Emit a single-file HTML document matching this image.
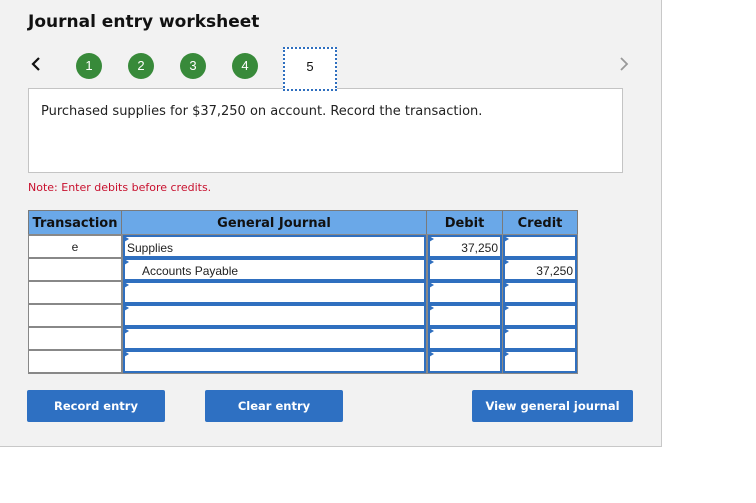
<!DOCTYPE html>
<html><head><meta charset="utf-8"><style>
*{box-sizing:border-box;margin:0;padding:0}
body{width:756px;height:503px;background:#fff;position:relative;font-family:"Liberation Sans",Arial,sans-serif;overflow:hidden}
.panel{position:absolute;left:0;top:0;width:662px;height:447px;background:#f2f2f2;border-right:1px solid #c8c8c8;border-bottom:1px solid #c8c8c8}
.a{position:absolute}
h1{position:absolute;left:28px;top:12px;font:bold 17px "DejaVu Sans",Verdana,sans-serif;color:#111}
.c{position:absolute;top:53px;width:26px;height:26px;border-radius:50%;background:#388a3a;color:#fff;font-size:13px;text-align:center;line-height:26px}
.box5{position:absolute;left:283px;top:47px;width:54px;height:44px;border:2px dotted #2f6fbf;background:#fff;text-align:center;line-height:36px;font-size:13px;color:#111}
.q{position:absolute;left:28px;top:88px;width:595px;height:85px;background:#fff;border:1px solid #c4c4c4;font:13px "DejaVu Sans",Verdana,sans-serif;color:#222;padding:15px 0 0 12px}
.note{position:absolute;left:28px;top:181px;font:11px "DejaVu Sans",Verdana,sans-serif;color:#c8102e}
.th{position:absolute;top:210px;height:25px;background:#6aa8e8;border:1px solid #7a7a7a;font:bold 13px "DejaVu Sans",Verdana,sans-serif;color:#111;text-align:center;line-height:25px}
.td{position:absolute;height:23px;border:1px solid #888;background:#fff;font-size:12px;color:#222}
.in{position:absolute;height:23px;border:2px solid #2f6fbf;background:#fff;font-size:12px;color:#222;line-height:22px}
.in::before{content:"";position:absolute;left:-1px;top:-1px;border-left:5px solid #2f6fbf;border-top:3px solid transparent;border-bottom:3px solid transparent}
.btn{position:absolute;top:390px;height:32px;background:#2e70c2;border-radius:2px;color:#fff;font:bold 11.5px "DejaVu Sans",Verdana,sans-serif;text-align:center;line-height:33px}
</style></head><body>
<div class="panel"></div>
<h1>Journal entry worksheet</h1>
<svg class="a" style="left:30px;top:56px" width="12" height="16"><path d="M9 2 L3 8 L9 14" stroke="#111" stroke-width="2.2" fill="none"/></svg>
<svg class="a" style="left:618px;top:56px" width="12" height="16"><path d="M3 2 L9 8 L3 14" stroke="#999" stroke-width="1.8" fill="none"/></svg>
<div class="c" style="left:76px">1</div>
<div class="c" style="left:128px">2</div>
<div class="c" style="left:180px">3</div>
<div class="c" style="left:232px">4</div>
<div class="q">Purchased supplies for $37,250 on account. Record the transaction.</div>
<div class="box5">5</div>
<div class="note">Note: Enter debits before credits.</div>
<div class="th" style="left:28px;width:94px">Transaction</div>
<div class="th" style="left:121px;width:306px">General Journal</div>
<div class="th" style="left:426px;width:77px">Debit</div>
<div class="th" style="left:502px;width:76px">Credit</div>
<div class="a" style="left:28px;top:234px;width:550px;height:140px;background:#888"></div>
<div class="td" style="left:28px;top:235px;width:94px;text-align:center;line-height:23px">e</div>
<div class="td" style="left:28px;top:258px;width:94px"></div>
<div class="td" style="left:28px;top:281px;width:94px"></div>
<div class="td" style="left:28px;top:304px;width:94px"></div>
<div class="td" style="left:28px;top:327px;width:94px"></div>
<div class="td" style="left:28px;top:350px;width:94px"></div>

<div class="in" style="left:123px;top:235px;width:303px;padding-left:2px">Supplies</div>
<div class="in" style="left:123px;top:258px;width:303px;padding-left:17px">Accounts Payable</div>
<div class="in" style="left:123px;top:281px;width:303px"></div>
<div class="in" style="left:123px;top:304px;width:303px"></div>
<div class="in" style="left:123px;top:327px;width:303px"></div>
<div class="in" style="left:123px;top:350px;width:303px"></div>

<div class="in" style="left:428px;top:235px;width:74px;text-align:right;padding-right:2px">37,250</div>
<div class="in" style="left:428px;top:258px;width:74px"></div>
<div class="in" style="left:428px;top:281px;width:74px"></div>
<div class="in" style="left:428px;top:304px;width:74px"></div>
<div class="in" style="left:428px;top:327px;width:74px"></div>
<div class="in" style="left:428px;top:350px;width:74px"></div>

<div class="in" style="left:503px;top:235px;width:74px"></div>
<div class="in" style="left:503px;top:258px;width:74px;text-align:right;padding-right:2px">37,250</div>
<div class="in" style="left:503px;top:281px;width:74px"></div>
<div class="in" style="left:503px;top:304px;width:74px"></div>
<div class="in" style="left:503px;top:327px;width:74px"></div>
<div class="in" style="left:503px;top:350px;width:74px"></div>

<div class="btn" style="left:27px;width:138px">Record entry</div>
<div class="btn" style="left:205px;width:138px">Clear entry</div>
<div class="btn" style="left:472px;width:161px">View general journal</div>
</body></html>
